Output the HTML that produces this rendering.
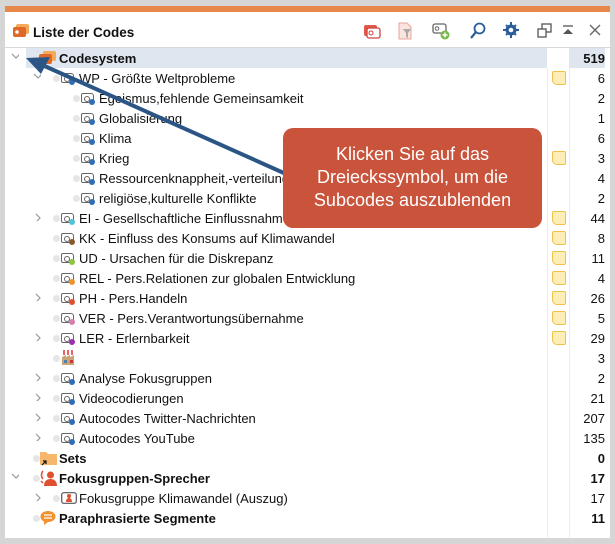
<!DOCTYPE html>
<html><head><meta charset="utf-8"><style>
*{margin:0;padding:0;box-sizing:border-box}
body{width:615px;height:544px;background:#d6d6d6;position:relative;overflow:hidden;font-family:"Liberation Sans",Arial,sans-serif;font-size:13px;color:#111}
#panel{position:absolute;left:5px;top:6px;width:605px;height:532px;background:#fff;border-top:6px solid #e8874a}
.hdr{position:absolute;left:0;top:0;width:605px;height:36px;border-bottom:1px solid #d8d8d8}
.title{position:absolute;left:28px;top:13px;font-weight:bold;font-size:13.5px}
.row{position:absolute;left:0;width:605px;height:20px}
.t{position:absolute;top:3px;white-space:nowrap}
.b{font-weight:bold}
.n{position:absolute;right:5px;top:3px}
.dot{position:absolute;top:7px;width:7px;height:7px;border-radius:50%;background:#e6e6e6}
.ci{position:absolute;top:5px;width:13px;height:10px;border:1.2px solid #666;border-radius:2px 3px 3px 2px}
.ci:before{content:"";position:absolute;left:1.5px;top:1.5px;width:4px;height:4px;border:1.1px solid #666;border-radius:50%}
.cd{position:absolute;left:7px;top:5px;width:6px;height:6px;border-radius:50%}
.chev{position:absolute;top:5px;width:8px;height:8px}
.memo{position:absolute;left:547px;top:3px;width:14px;height:14px;background:#fdeeb8;border:1px solid #f0c14a;border-radius:2px 2px 2px 5px}
.vl{position:absolute;top:37px;width:1px;height:489px;background:#ececec}
</style></head><body>
<div id="panel">
<div class="hdr">
<svg style="position:absolute;left:8px;top:12px" width="16" height="14"><rect x="3" y="0" width="13" height="10" rx="2" fill="#f4a85a"/><rect x="0" y="3" width="13" height="10" rx="2" fill="#e0692a"/><circle cx="4" cy="8" r="1.8" fill="#fff"/></svg>
<div class="title">Liste der Codes</div>
<svg style="position:absolute;left:357px;top:11px" width="20" height="16"><rect x="2" y="2" width="13" height="11" rx="2" fill="#e05a4a"/><rect x="5" y="5" width="13" height="10" rx="2" fill="#fff" stroke="#d04040" stroke-width="1.3"/><circle cx="9" cy="10" r="2" fill="none" stroke="#d04040"/></svg>
<svg style="position:absolute;left:392px;top:10px" width="16" height="18"><path d="M2 1h8l4 4v12H2z" fill="#fbe3e0" stroke="#e8a59d"/><path d="M6 7h8l-3 4v5l-2-1v-4z" fill="#aaa"/></svg>
<svg style="position:absolute;left:427px;top:10px" width="18" height="18"><rect x="1" y="2" width="13" height="9" rx="2" fill="none" stroke="#666" stroke-width="1.3"/><circle cx="5" cy="6.5" r="1.8" fill="none" stroke="#666"/><circle cx="13" cy="13" r="4.5" fill="#7ab648"/><path d="M13 10.5v5M10.5 13h5" stroke="#fff" stroke-width="1.4"/></svg>
<svg style="position:absolute;left:464px;top:10px" width="18" height="18"><circle cx="10.5" cy="6.5" r="5" fill="none" stroke="#2a5d9a" stroke-width="1.8"/><path d="M7 10l-5 6" stroke="#2a5d9a" stroke-width="2.2"/></svg>
<svg style="position:absolute;left:498px;top:10px" width="16" height="16"><g fill="#2a5d9a"><circle cx="8" cy="8" r="5.5"/><path d="M7 0h2v16H7zM0 7h16v2H0z"/><path d="M2.3 3.7l1.4-1.4 10 10-1.4 1.4zM12.3 2.3l1.4 1.4-10 10-1.4-1.4z"/></g><circle cx="8" cy="8" r="2.3" fill="#fff"/></svg>
<svg style="position:absolute;left:532px;top:11px" width="16" height="16"><rect x="5" y="1" width="9" height="8" fill="#fff" stroke="#555" stroke-width="1.3"/><rect x="1" y="6" width="8" height="8" fill="#fff" stroke="#555" stroke-width="1.3"/></svg>
<svg style="position:absolute;left:557px;top:13px" width="12" height="12"><path d="M1 1h10" stroke="#555" stroke-width="1.3"/><path d="M1 9l5-5 5 5z" fill="#555"/></svg>
<svg style="position:absolute;left:584px;top:12px" width="12" height="12"><path d="M1 1l10 10M11 1L1 11" stroke="#666" stroke-width="1.4"/></svg>
</div>
<div class="vl" style="left:542px"></div>
<div class="vl" style="left:564px"></div>
<div style="position:absolute;left:21px;top:36px;width:579px;height:20px;background:#dfe6f0"></div>
<div style="position:absolute;left:542px;top:36px;width:22px;height:20px;background:#fff"></div>
</div>

<div style="position:absolute;left:5px;top:12px;width:605px;height:526px">
<div class="row" style="top:36px"><svg class="chev" style="left:6px" width="10" height="8"><path d="M1 1l4 4 4-4" fill="none" stroke="#999" stroke-width="1.2"/></svg><div class="dot" style="left:29px"></div><svg style="position:absolute;left:34px;top:3px" width="17" height="14"><rect x="4" y="0" width="13" height="10" rx="2" fill="#f4a85a"/><rect x="0" y="3" width="13" height="10" rx="2" fill="#e0692a"/><circle cx="4" cy="8" r="1.8" fill="#fff"/></svg><span class="t b" style="left:54px">Codesystem</span><span class="n b">519</span></div>

<div class="row" style="top:56px"><svg class="chev" style="left:28px" width="10" height="8"><path d="M1 1l4 4 4-4" fill="none" stroke="#999" stroke-width="1.2"/></svg><div class="dot" style="left:48px"></div><div class="ci" style="left:56px"><div class="cd" style="background:#2f6db5"></div></div><span class="t" style="left:74px">WP - Größte Weltprobleme</span><div class="memo"></div><span class="n">6</span></div>

<div class="row" style="top:76px"><div class="dot" style="left:68px"></div><div class="ci" style="left:76px"><div class="cd" style="background:#2f6db5"></div></div><span class="t" style="left:94px">Egoismus,fehlende Gemeinsamkeit</span><span class="n">2</span></div>
<div class="row" style="top:96px"><div class="dot" style="left:68px"></div><div class="ci" style="left:76px"><div class="cd" style="background:#2f6db5"></div></div><span class="t" style="left:94px">Globalisierung</span><span class="n">1</span></div>
<div class="row" style="top:116px"><div class="dot" style="left:68px"></div><div class="ci" style="left:76px"><div class="cd" style="background:#2f6db5"></div></div><span class="t" style="left:94px">Klima</span><span class="n">6</span></div>
<div class="row" style="top:136px"><div class="dot" style="left:68px"></div><div class="ci" style="left:76px"><div class="cd" style="background:#2f6db5"></div></div><span class="t" style="left:94px">Krieg</span><div class="memo"></div><span class="n">3</span></div>
<div class="row" style="top:156px"><div class="dot" style="left:68px"></div><div class="ci" style="left:76px"><div class="cd" style="background:#2f6db5"></div></div><span class="t" style="left:94px">Ressourcenknappheit,-verteilung</span><span class="n">4</span></div>
<div class="row" style="top:176px"><div class="dot" style="left:68px"></div><div class="ci" style="left:76px"><div class="cd" style="background:#2f6db5"></div></div><span class="t" style="left:94px">religiöse,kulturelle Konflikte</span><span class="n">2</span></div>

<div class="row" style="top:196px"><svg class="chev" style="left:30px" width="8" height="10"><path d="M1 1l4 4-4 4" fill="none" stroke="#999" stroke-width="1.2"/></svg><div class="dot" style="left:48px"></div><div class="ci" style="left:56px"><div class="cd" style="background:#4fc3d9"></div></div><span class="t" style="left:74px">EI - Gesellschaftliche Einflussnahme</span><div class="memo"></div><span class="n">44</span></div>
<div class="row" style="top:216px"><div class="dot" style="left:48px"></div><div class="ci" style="left:56px"><div class="cd" style="background:#8b5a2b"></div></div><span class="t" style="left:74px">KK - Einfluss des Konsums auf Klimawandel</span><div class="memo"></div><span class="n">8</span></div>
<div class="row" style="top:236px"><div class="dot" style="left:48px"></div><div class="ci" style="left:56px"><div class="cd" style="background:#8cc63f"></div></div><span class="t" style="left:74px">UD - Ursachen für die Diskrepanz</span><div class="memo"></div><span class="n">11</span></div>
<div class="row" style="top:256px"><div class="dot" style="left:48px"></div><div class="ci" style="left:56px"><div class="cd" style="background:#f0922e"></div></div><span class="t" style="left:74px">REL - Pers.Relationen zur globalen Entwicklung</span><div class="memo"></div><span class="n">4</span></div>
<div class="row" style="top:276px"><svg class="chev" style="left:30px" width="8" height="10"><path d="M1 1l4 4-4 4" fill="none" stroke="#999" stroke-width="1.2"/></svg><div class="dot" style="left:48px"></div><div class="ci" style="left:56px"><div class="cd" style="background:#e0502e"></div></div><span class="t" style="left:74px">PH - Pers.Handeln</span><div class="memo"></div><span class="n">26</span></div>
<div class="row" style="top:296px"><div class="dot" style="left:48px"></div><div class="ci" style="left:56px"><div class="cd" style="background:#d77fb0"></div></div><span class="t" style="left:74px">VER - Pers.Verantwortungsübernahme</span><div class="memo"></div><span class="n">5</span></div>
<div class="row" style="top:316px"><svg class="chev" style="left:30px" width="8" height="10"><path d="M1 1l4 4-4 4" fill="none" stroke="#999" stroke-width="1.2"/></svg><div class="dot" style="left:48px"></div><div class="ci" style="left:56px"><div class="cd" style="background:#9b2fae"></div></div><span class="t" style="left:74px">LER - Erlernbarkeit</span><div class="memo"></div><span class="n">29</span></div>
<div class="row" style="top:336px"><div class="dot" style="left:48px"></div><svg style="position:absolute;left:56px;top:1px" width="17" height="17"><path d="M1 16V8l4-2v2l4-2v2l4-2v10z" fill="#c9a477"/><path d="M3 6V1M7 6V1M11 6V1" stroke="#d33" stroke-width="1.5"/><rect x="3" y="11" width="3" height="3" fill="#4a7fb0"/><rect x="9" y="11" width="3" height="3" fill="#c33"/></svg><span class="n">3</span></div>
<div class="row" style="top:356px"><svg class="chev" style="left:30px" width="8" height="10"><path d="M1 1l4 4-4 4" fill="none" stroke="#999" stroke-width="1.2"/></svg><div class="dot" style="left:48px"></div><div class="ci" style="left:56px"><div class="cd" style="background:#2f6db5"></div></div><span class="t" style="left:74px">Analyse Fokusgruppen</span><span class="n">2</span></div>
<div class="row" style="top:376px"><svg class="chev" style="left:30px" width="8" height="10"><path d="M1 1l4 4-4 4" fill="none" stroke="#999" stroke-width="1.2"/></svg><div class="dot" style="left:48px"></div><div class="ci" style="left:56px"><div class="cd" style="background:#2f6db5"></div></div><span class="t" style="left:74px">Videocodierungen</span><span class="n">21</span></div>
<div class="row" style="top:396px"><svg class="chev" style="left:30px" width="8" height="10"><path d="M1 1l4 4-4 4" fill="none" stroke="#999" stroke-width="1.2"/></svg><div class="dot" style="left:48px"></div><div class="ci" style="left:56px"><div class="cd" style="background:#2f6db5"></div></div><span class="t" style="left:74px">Autocodes Twitter-Nachrichten</span><span class="n">207</span></div>
<div class="row" style="top:416px"><svg class="chev" style="left:30px" width="8" height="10"><path d="M1 1l4 4-4 4" fill="none" stroke="#999" stroke-width="1.2"/></svg><div class="dot" style="left:48px"></div><div class="ci" style="left:56px"><div class="cd" style="background:#2f6db5"></div></div><span class="t" style="left:74px">Autocodes YouTube</span><span class="n">135</span></div>
<div class="row" style="top:436px"><div class="dot" style="left:28px"></div><svg style="position:absolute;left:35px;top:2px" width="17" height="16"><path d="M0 2h6l2 2h9v11H0z" fill="#f6b66b"/><path d="M2 15l4-4M3 11h3v3" stroke="#111" stroke-width="1.2" fill="none"/></svg><span class="t b" style="left:54px">Sets</span><span class="n b">0</span></div>
<div class="row" style="top:456px"><svg class="chev" style="left:6px" width="10" height="8"><path d="M1 1l4 4 4-4" fill="none" stroke="#999" stroke-width="1.2"/></svg><div class="dot" style="left:28px"></div><svg style="position:absolute;left:35px;top:2px" width="17" height="16"><circle cx="10.5" cy="5" r="3.5" fill="#e0502e"/><path d="M4 16c0-5 3-7 6.5-7s6.5 2 6.5 7z" fill="#e0502e"/><path d="M3 1c-2 2-2 6 0 8M1 11l2 2" stroke="#e0502e" stroke-width="1.5" fill="none"/></svg><span class="t b" style="left:54px">Fokusgruppen-Sprecher</span><span class="n b">17</span></div>
<div class="row" style="top:476px"><svg class="chev" style="left:30px" width="8" height="10"><path d="M1 1l4 4-4 4" fill="none" stroke="#999" stroke-width="1.2"/></svg><div class="dot" style="left:48px"></div><svg style="position:absolute;left:56px;top:4px" width="16" height="12"><rect x="0.7" y="0.7" width="14.6" height="10.6" rx="2" fill="#fff" stroke="#555" stroke-width="1.2"/><circle cx="8" cy="4" r="2" fill="#e0502e"/><path d="M5 10c0-3 1.5-4 3-4s3 1 3 4z" fill="#e0502e"/></svg><span class="t" style="left:74px">Fokusgruppe Klimawandel (Auszug)</span><span class="n">17</span></div>
<div class="row" style="top:496px"><div class="dot" style="left:28px"></div><svg style="position:absolute;left:35px;top:2px" width="16" height="16"><path d="M8 1c4.5 0 7.5 2.5 7.5 5.5S12.5 12 8 12l-4 3v-3.5C2 10.5.5 8.8.5 6.5.5 3.5 3.5 1 8 1z" fill="#f0922e"/><path d="M4 5h8M4 8h8" stroke="#fff" stroke-width="1.2"/></svg><span class="t b" style="left:54px">Paraphrasierte Segmente</span><span class="n b">11</span></div>
</div>

<svg style="position:absolute;left:0;top:0" width="615" height="544">
<path d="M295 178L40 64" stroke="#2a5585" stroke-width="4"/>
<path d="M26 58L50 57L41 74z" fill="#2a5585"/>
</svg>
<div style="position:absolute;left:283px;top:128px;width:259px;height:100px;background:#c9533b;border-radius:10px;color:#fff;font-size:18px;line-height:23px;text-align:center;padding-top:15px">Klicken Sie auf das<br>Dreieckssymbol, um die<br>Subcodes auszublenden</div>
</body></html>
